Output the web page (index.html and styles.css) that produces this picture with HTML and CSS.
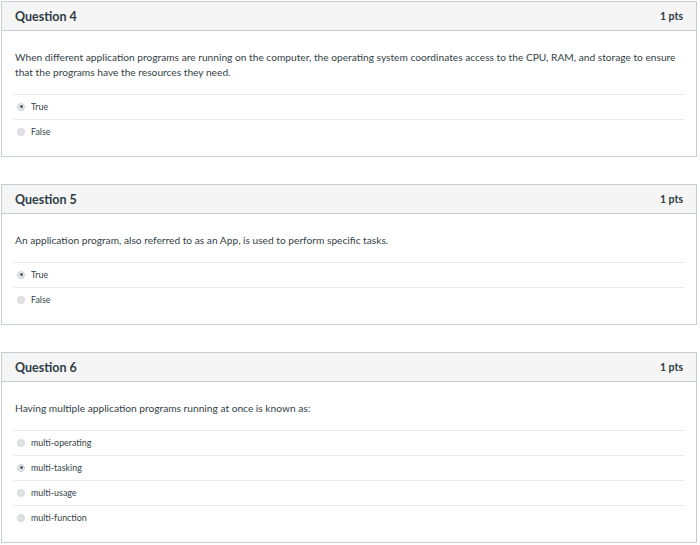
FILE: index.html
```html
<!DOCTYPE html>
<html>
<head>
<meta charset="utf-8">
<link rel="stylesheet" href="styles.css">
</head>
<body>
<div class="quiz">
  <section class="card">
    <header class="card-header"><h2 class="title">Question 4</h2><span class="pts">1 pts</span></header>
    <div class="card-body">
      <p class="question">When different application programs are running on the computer, the operating system coordinates access to the CPU, RAM, and storage to ensure that the programs have the resources they need.</p>
      <ul class="answers">
        <li class="answer"><span class="radio checked"></span><span class="label">True</span></li>
        <li class="answer"><span class="radio"></span><span class="label">False</span></li>
      </ul>
    </div>
  </section>
  <section class="card">
    <header class="card-header"><h2 class="title">Question 5</h2><span class="pts">1 pts</span></header>
    <div class="card-body">
      <p class="question">An application program, also referred to as an App, is used to perform specific tasks.</p>
      <ul class="answers">
        <li class="answer"><span class="radio checked"></span><span class="label">True</span></li>
        <li class="answer"><span class="radio"></span><span class="label">False</span></li>
      </ul>
    </div>
  </section>
  <section class="card">
    <header class="card-header"><h2 class="title">Question 6</h2><span class="pts">1 pts</span></header>
    <div class="card-body">
      <p class="question">Having multiple application programs running at once is known as:</p>
      <ul class="answers">
        <li class="answer"><span class="radio"></span><span class="label">multi-operating</span></li>
        <li class="answer"><span class="radio checked"></span><span class="label">multi-tasking</span></li>
        <li class="answer"><span class="radio"></span><span class="label">multi-usage</span></li>
        <li class="answer"><span class="radio"></span><span class="label">multi-function</span></li>
      </ul>
    </div>
  </section>
</div>
</body>
</html>
```
FILE: styles.css
```css
html, body {
  margin: 0;
  padding: 0;
  background: #ffffff;
}
body {
  font-family: Lato, "Open Sans", "Liberation Sans", sans-serif;
  color: #2d3b45;
}
.quiz {
  padding: 1px 3px 0 1px;
  display: flex;
  flex-direction: column;
  gap: 27px;
}
.card {
  border: 1px solid #c7cdd1;
  background: #fff;
}
.card-header {
  height: 28px;
  background: #f5f5f5;
  border-bottom: 1px solid #c7cdd1;
  display: flex;
  justify-content: space-between;
  align-items: center;
  padding: 0 13px 0 13px;
}
.title {
  margin: 0;
  font-size: 12.5px;
  font-weight: 700;
  color: #2d3b45;
}
.pts {
  font-size: 10.5px;
  font-weight: 700;
  color: #2d3b45;
}
.card-body {
  padding: 19px 12px 12px 12px;
}
.question {
  margin: 0 0 14px 1px;
  font-size: 10.2px;
  line-height: 15px;
  color: #343f47;
}
.answers {
  list-style: none;
  margin: 0;
  padding: 0;
}
.answer {
  height: 22px;
  padding-bottom: 2px;
  border-top: 1px solid #e6e8ea;
  display: flex;
  align-items: center;
  font-size: 8.9px;
}
.radio {
  width: 8px;
  height: 8px;
  box-sizing: border-box;
  border-radius: 50%;
  border: 1px solid #d3d6d9;
  background: radial-gradient(circle, #e2e4e6 0%, #dcdfe1 100%);
  margin-left: 3px;
  margin-right: 6px;
  margin-top: 1px;
  position: relative;
  flex: none;
}
.radio.checked {
  background: #e6e8ea;
  border-color: #cfd2d5;
}
.radio.checked::after {
  content: "";
  position: absolute;
  left: 1.5px;
  top: 1.5px;
  width: 3px;
  height: 3px;
  border-radius: 50%;
  background: #555c61;
}
.label {
  color: #343f47;
}
```
